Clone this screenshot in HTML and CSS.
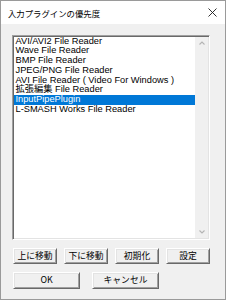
FILE: index.html
```html
<!DOCTYPE html>
<html lang="ja">
<head>
    <meta charset="UTF-8">
    <title>入力プラグインの優先度</title>
    <link rel="stylesheet" href="styles.css">
</head>
<body>
    <div class="window">
        <div class="titlebar">
            <span class="title">入力プラグインの優先度</span>
            <svg class="close" width="9" height="9" viewBox="0 0 9 9">
                <path d="M0.5 0.5 L8.5 8.5 M8.5 0.5 L0.5 8.5" stroke="#1a1a1a" stroke-width="0.9" fill="none"/>
            </svg>
        </div>
        <div class="client">
            <div class="listbox">
                <ul class="items">
                    <li>AVI/AVI2 File Reader</li>
                    <li>Wave File Reader</li>
                    <li>BMP File Reader</li>
                    <li>JPEG/PNG File Reader</li>
                    <li>AVI File Reader ( Video For Windows )</li>
                    <li>拡張編集 File Reader</li>
                    <li class="selected">InputPipePlugin</li>
                    <li>L-SMASH Works File Reader</li>
                </ul>
                <div class="scrollbar">
                    <div class="arrow">
                        <svg width="6" height="4" viewBox="0 0 6 4"><path d="M0.5 3.5 L3 1 L5.5 3.5" stroke="#b4b4b4" stroke-width="1.1" fill="none"/></svg>
                    </div>
                    <div class="arrow">
                        <svg width="6" height="4" viewBox="0 0 6 4"><path d="M0.5 0.5 L3 3 L5.5 0.5" stroke="#b4b4b4" stroke-width="1.1" fill="none"/></svg>
                    </div>
                </div>
            </div>
            <div class="button-row">
                <button class="btn">上に移動</button>
                <button class="btn">下に移動</button>
                <button class="btn">初期化</button>
                <button class="btn">設定</button>
            </div>
            <div class="button-row wide">
                <button class="btn ok">OK</button>
                <button class="btn ok">キャンセル</button>
            </div>
        </div>
    </div>
</body>
</html>
```

FILE: styles.css
```css
body {
    margin: 0;
    background-color: #f0f0f0;
    font-family: "Liberation Sans", "Noto Sans CJK JP", sans-serif;
}
.window {
    width: 226px;
    height: 300px;
    box-sizing: border-box;
    border: 1px solid #9a9a9a;
    background-color: #f0f0f0;
}
.titlebar {
    height: 23px;
    background-color: #ffffff;
    display: flex;
    align-items: center;
    justify-content: space-between;
    padding: 0 8px 0 7px;
}
.title {
    font-family: "Noto Sans CJK JP", sans-serif;
    font-size: 8.4px;
    color: #000;
    line-height: 10px;
}
.close {
    display: block;
}
.client {
    padding: 10.5px 15px 0 11px;
}
.listbox {
    height: 205.5px;
    box-sizing: border-box;
    display: flex;
    background-color: #ffffff;
    border-top: 1px solid #a0a0a0;
    border-left: 1px solid #a0a0a0;
    border-right: 1px solid #ffffff;
    border-bottom: 1px solid #ffffff;
    box-shadow: inset 1px 1px 0 #696969, inset -1px -1px 0 #e3e3e3;
    padding: 1px;
}
.items {
    flex: 1;
    list-style: none;
    margin: 0;
    padding: 0;
    font-size: 9.25px;
    line-height: 9.75px;
    color: #000;
}
.items li {
    padding-left: 1.5px;
    white-space: nowrap;
    height: 9.75px;
}
.items li.selected {
    background-color: #0078d7;
    color: #ffffff;
}
.scrollbar {
    width: 12.75px;
    background-color: #f0f0f0;
    display: flex;
    flex-direction: column;
    justify-content: space-between;
}
.arrow {
    height: 12.75px;
    display: flex;
    align-items: center;
    justify-content: center;
}
.arrow svg {
    display: block;
}
.button-row {
    display: flex;
    gap: 7px;
    padding-left: 1px;
    margin-top: 7.5px;
}
.button-row.wide {
    gap: 12px;
    margin-top: 8px;
}
.btn {
    width: 44px;
    height: 16.5px;
    padding: 0;
    box-sizing: border-box;
    background-color: #f0f0f0;
    border-top: 1px solid #ffffff;
    border-left: 1px solid #ffffff;
    border-right: 1px solid #696969;
    border-bottom: 1px solid #696969;
    box-shadow: inset 1px 1px 0 #e3e3e3, inset -1px -1px 0 #a0a0a0;
    font-family: "Noto Sans CJK JP", sans-serif;
    font-size: 8.8px;
    line-height: 10px;
    color: #000;
}
.btn.ok {
    width: 67px;
}
```
